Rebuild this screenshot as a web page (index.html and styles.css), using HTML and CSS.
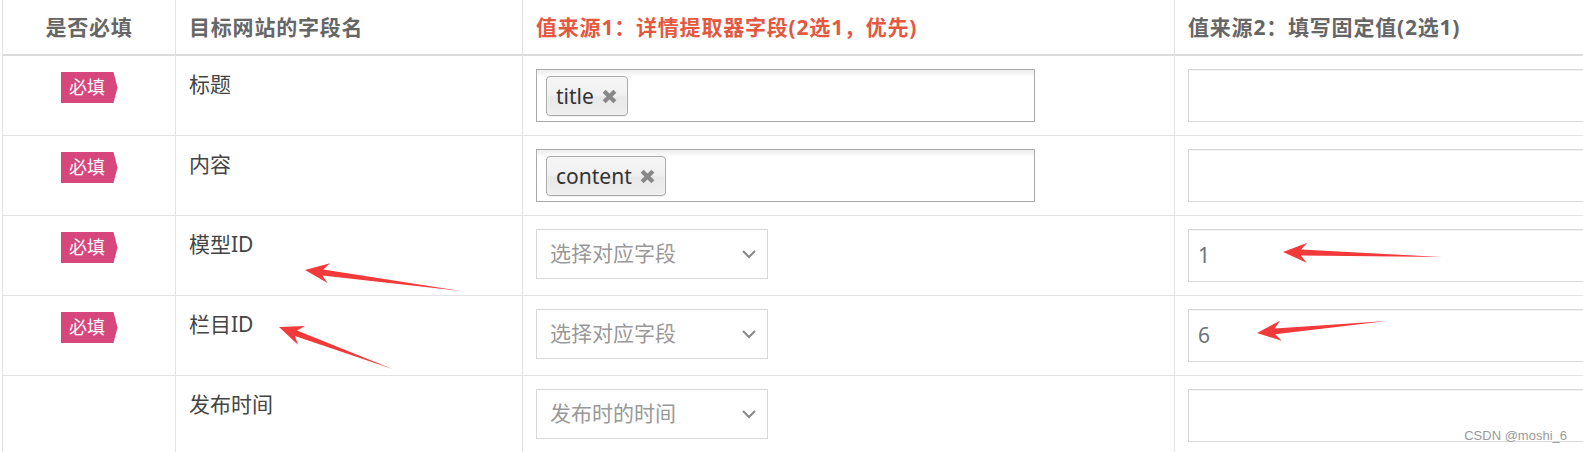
FILE: index.html
```html
<!DOCTYPE html>
<html lang="zh-CN">
<head>
<meta charset="utf-8">
<title>字段映射</title>
<link rel="stylesheet" href="styles.css">
</head>
<body>
<div class="page">
  <div class="grid">
    <div class="cell head center">是否必填</div>
    <div class="cell head">目标网站的字段名</div>
    <div class="cell head hot">值来源1：详情提取器字段(2选1，优先)</div>
    <div class="cell head">值来源2：填写固定值(2选1)</div>

    <div class="cell center"><span class="badge">必填</span></div>
    <div class="cell label">标题</div>
    <div class="cell"><div class="chosen"><span class="choice">title<svg class="x" viewBox="0 0 14 14"><path d="M2 2L12 12M12 2L2 12"/></svg></span></div></div>
    <div class="cell"><div class="input"></div></div>

    <div class="cell center"><span class="badge">必填</span></div>
    <div class="cell label">内容</div>
    <div class="cell"><div class="chosen"><span class="choice">content<svg class="x" viewBox="0 0 14 14"><path d="M2 2L12 12M12 2L2 12"/></svg></span></div></div>
    <div class="cell"><div class="input"></div></div>

    <div class="cell center"><span class="badge">必填</span></div>
    <div class="cell label">模型ID</div>
    <div class="cell"><div class="select"><span>选择对应字段</span><svg class="chev" viewBox="0 0 16 10"><path d="M2 2L8 8L14 2"/></svg></div></div>
    <div class="cell"><div class="input">1</div></div>

    <div class="cell center"><span class="badge">必填</span></div>
    <div class="cell label">栏目ID</div>
    <div class="cell"><div class="select"><span>选择对应字段</span><svg class="chev" viewBox="0 0 16 10"><path d="M2 2L8 8L14 2"/></svg></div></div>
    <div class="cell"><div class="input">6</div></div>

    <div class="cell center"></div>
    <div class="cell label">发布时间</div>
    <div class="cell"><div class="select"><span>发布时的时间</span><svg class="chev" viewBox="0 0 16 10"><path d="M2 2L8 8L14 2"/></svg></div></div>
    <div class="cell"><div class="input"></div></div>
  </div>

  <svg class="arrows" width="1583" height="452" viewBox="0 0 1583 452">
    <polygon points="305,270 327.5,283.1 322.4,275.4 461,291 323.2,269.4 330.1,263.3"/>
    <polygon points="279,327 298,344.7 294.9,336.1 392.5,369 297,330.4 305,326"/>
    <polygon points="1283,252 1306.7,262.7 1300.9,255.6 1442,257 1301.1,249.6 1307.3,242.8"/>
    <polygon points="1257,333 1281.8,340.8 1275.2,334.3 1387,321 1274.6,328.4 1280,320.8"/>
  </svg>
  <div class="watermark">CSDN @moshi_6</div>
</div>
</body>
</html>
```

FILE: styles.css
```css
html, body {
  margin: 0;
  padding: 0;
  background: #fff;
}
body {
  width: 1583px;
  height: 452px;
  overflow: hidden;
  font-family: "Noto Sans", "Noto Sans CJK SC", sans-serif;
  font-size: 21px;
  color: #333;
}
.page {
  position: relative;
  width: 1583px;
  height: 452px;
  overflow: hidden;
}
.grid {
  margin-left: 2px;
  display: grid;
  grid-template-columns: 173px 347px 652px 600px;
  width: 1772px;
  border-left: 1px solid #e3e3e3;
}
.cell {
  box-sizing: border-box;
  border-right: 1px solid #e3e3e3;
  border-bottom: 1px solid #e3e3e3;
  padding: 13px 13px 13px 13px;
  line-height: 1.5;
}
.head {
  height: 56px;
  border-bottom: 2px solid #dcdcdc;
  display: flex;
  align-items: center;
  padding-top: 1px;
  padding-bottom: 0;
  font-weight: bold;
  color: #666;
  letter-spacing: 0.8px;
}
.head.center {
  justify-content: center;
}
.head.hot {
  color: #e3583e;
}
.center {
  text-align: center;
}
.label {
  color: #444;
}
.badge {
  display: inline-block;
  margin-top: 3px;
  width: 57px;
  height: 31px;
  padding-right: 4px;
  box-sizing: border-box;
  background: #d6477d;
  color: #fff;
  font-size: 18px;
  line-height: 31px;
  text-align: center;
  clip-path: polygon(0 0, 53px 0, 57px 50%, 53px 100%, 0 100%);
}
.chosen {
  box-sizing: border-box;
  width: 499px;
  height: 53px;
  border: 1px solid #aaa;
  background: linear-gradient(#eee 1%, #fff 15%);
  padding: 6px 0 0 9px;
  display: flex;
  align-items: flex-start;
}
.choice {
  box-sizing: border-box;
  height: 40px;
  display: inline-flex;
  align-items: center;
  gap: 8px;
  padding: 0 10px 0 9px;
  border: 1px solid #aaa;
  border-radius: 4px;
  background: linear-gradient(#f4f4f4 20%, #f0f0f0 50%, #e8e8e8 52%, #eee 100%);
  box-shadow: inset 0 0 2px #fff, 0 1px 0 rgba(0, 0, 0, 0.05);
  color: #333;
  line-height: 1;
}
.x {
  width: 15px;
  height: 15px;
  fill: none;
  stroke: #888;
  stroke-width: 4;
}
.select {
  box-sizing: border-box;
  width: 232px;
  height: 50px;
  border: 1px solid #d8d8d8;
  display: flex;
  align-items: center;
  justify-content: space-between;
  padding: 0 10px 0 13px;
  color: #999;
}
.chev {
  width: 16px;
  height: 10px;
  fill: none;
  stroke: #888;
  stroke-width: 2;
}
.input {
  box-sizing: border-box;
  width: 560px;
  height: 53px;
  border: 1px solid #d8d8d8;
  box-shadow: inset 0 1px 1px rgba(0, 0, 0, 0.06);
  display: flex;
  align-items: center;
  padding-left: 9px;
  color: #6b7280;
}
.arrows {
  position: absolute;
  left: 0;
  top: 0;
  pointer-events: none;
}
.arrows polygon {
  fill: #f23a3a;
}
.watermark {
  position: absolute;
  right: 16px;
  bottom: 9px;
  font-family: "Liberation Sans", "DejaVu Sans", sans-serif;
  font-size: 13px;
  color: #9a9a9a;
}
```
